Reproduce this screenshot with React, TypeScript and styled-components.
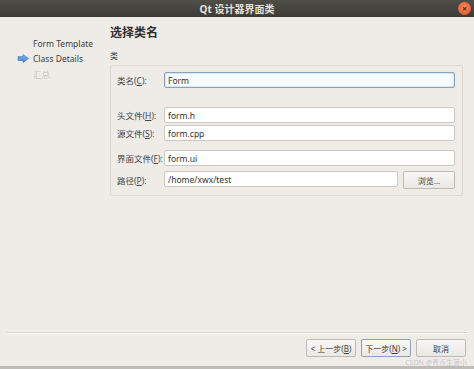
import React from 'react';
import styled, { createGlobalStyle } from 'styled-components';

const GlobalStyle = createGlobalStyle`
    html, body {
        margin: 0;
        padding: 0;
        background: #efebe7;
    }
    * {
        box-sizing: border-box;
    }
`

const Window = styled.div`
    position: relative;
    width: 474px;
    height: 369px;
    display: flex;
    flex-direction: column;
    background: #efece8;
    font-family: "Noto Sans", "Noto Sans CJK SC", sans-serif;
    color: #3c3c3c;
    overflow: hidden;
    border-bottom: 3px solid #bfbbb6;
`

const TitleBar = styled.div`
    position: relative;
    height: 17px;
    flex: none;
    display: flex;
    align-items: center;
    justify-content: center;
    background: linear-gradient(#4f4e49, #3b3a36);
    color: #e4e0d8;
    font-size: 10px;
    font-weight: bold;
`

const CloseButton = styled.div`
    position: absolute;
    right: 3px;
    top: 2px;
    width: 13px;
    height: 13px;
    border-radius: 50%;
    background: radial-gradient(circle at 50% 40%, #f8875a, #e0532a);
    display: flex;
    align-items: center;
    justify-content: center;
    color: #5a2a18;
    font-size: 9px;
    line-height: 1;
`

const Body = styled.div`
    flex: 1;
    display: flex;
    flex-direction: column;
    padding: 0 7px;
`

const Main = styled.div`
    flex: 1;
    display: flex;
`

const Sidebar = styled.div`
    width: 103px;
    flex: none;
    padding-top: 19px;
    display: flex;
    flex-direction: column;
`

const NavItem = styled.div<{ $disabled?: boolean }>`
    height: 15px;
    display: flex;
    align-items: center;
    font-size: 8.5px;
    color: ${(props) => (props.$disabled ? '#c9c5c0' : '#3c3c3c')};
    padding-left: 10px;
`

const ArrowSlot = styled.div`
    width: 16px;
    height: 10px;
    display: flex;
    align-items: center;
`

const Content = styled.div`
    flex: 1;
    display: flex;
    flex-direction: column;
    padding-top: 8px;
    padding-right: 4px;
`

const Heading = styled.div`
    font-size: 12px;
    font-weight: bold;
    color: #2e2e2e;
    line-height: 16px;
`

const GroupTitle = styled.div`
    margin-top: 10px;
    font-size: 8px;
    line-height: 10px;
`

const Frame = styled.div`
    margin-top: 4px;
    border: 1px solid #dcd8d3;
    border-radius: 2px;
    background: #efece8;
    padding: 6px 7px 6px 6px;
    display: flex;
    flex-direction: column;
`

const Row = styled.div<{ $gap?: number }>`
    display: grid;
    grid-template-columns: 47px 1fr;
    align-items: center;
    margin-top: ${(props) => props.$gap ?? 0}px;
`

const Label = styled.div`
    font-size: 8.5px;
    color: #444;
    white-space: nowrap;
`

const InputRow = styled.div`
    display: flex;
    gap: 5px;
`

const Input = styled.div<{ $focused?: boolean }>`
    flex: 1;
    height: 16px;
    display: flex;
    align-items: center;
    padding-left: 3px;
    font-size: 8.5px;
    color: #333;
    background: ${(props) => (props.$focused ? '#f5fbff' : '#ffffff')};
    border: 1px solid ${(props) => (props.$focused ? '#8aa3ba' : '#ccc8c3')};
    box-shadow: ${(props) => (props.$focused ? 'inset 0 0 0 1px #d6e6f4' : 'none')};
    border-radius: 2px;
`

const Button = styled.div<{ $width?: number; $focused?: boolean }>`
    width: ${(props) => props.$width ?? 50}px;
    height: 18px;
    display: flex;
    align-items: center;
    justify-content: center;
    font-size: 8px;
    color: #3c3c3c;
    background: linear-gradient(#f9f8f7, #eae8e5);
    border: 1px solid ${(props) => (props.$focused ? '#8aa3ba' : '#bdb9b3')};
    border-radius: 2px;
    white-space: nowrap;
`

const Separator = styled.div`
    height: 1px;
    background: #d6d2cd;
    border-bottom: 1px solid #f9f8f6;
    box-sizing: content-box;
`

const Footer = styled.div`
    height: 32px;
    display: flex;
    justify-content: flex-end;
    align-items: center;
    gap: 5px;
    padding-right: 1px;
    padding-bottom: 4px;
`

const Underline = styled.span`
    text-decoration: underline;
`

const Watermark = styled.div`
    position: absolute;
    right: 7px;
    bottom: 0;
    font-size: 7px;
    line-height: 7px;
    color: rgba(190, 192, 198, 0.85);
    white-space: nowrap;
`

function Arrow() {
    return (
        <svg width="12" height="9" viewBox="0 0 12 9">
            <defs>
                <linearGradient id="ag" x1="0" y1="0" x2="0" y2="1">
                    <stop offset="0" stopColor="#8ab8ec" />
                    <stop offset="1" stopColor="#3f7fcf" />
                </linearGradient>
            </defs>
            <path d="M1 2.5 H6 V0.5 L11.5 4.5 L6 8.5 V6.5 H1 Z" fill="url(#ag)" stroke="#3a73bb" strokeWidth="0.6" strokeLinejoin="round" />
        </svg>
    );
}

function App() {
    return (
        <>
            <GlobalStyle />
            <Window>
                <TitleBar>
                    Qt 设计器界面类
                    <CloseButton>×</CloseButton>
                </TitleBar>
                <Body>
                    <Main>
                        <Sidebar>
                            <NavItem><ArrowSlot />Form Template</NavItem>
                            <NavItem><ArrowSlot><Arrow /></ArrowSlot>Class Details</NavItem>
                            <NavItem $disabled><ArrowSlot />汇总</NavItem>
                        </Sidebar>
                        <Content>
                            <Heading>选择类名</Heading>
                            <GroupTitle>类</GroupTitle>
                            <Frame>
                                <Row>
                                    <Label>类名(<Underline>C</Underline>):</Label>
                                    <Input $focused>Form</Input>
                                </Row>
                                <Row $gap={19}>
                                    <Label>头文件(<Underline>H</Underline>):</Label>
                                    <Input>form.h</Input>
                                </Row>
                                <Row $gap={2}>
                                    <Label>源文件(<Underline>S</Underline>):</Label>
                                    <Input>form.cpp</Input>
                                </Row>
                                <Row $gap={9}>
                                    <Label>界面文件(<Underline>F</Underline>):</Label>
                                    <Input>form.ui</Input>
                                </Row>
                                <Row $gap={5}>
                                    <Label>路径(<Underline>P</Underline>):</Label>
                                    <InputRow>
                                        <Input>/home/xwx/test</Input>
                                        <Button $width={52}>浏览...</Button>
                                    </InputRow>
                                </Row>
                            </Frame>
                        </Content>
                    </Main>
                    <Separator />
                    <Footer>
                        <Button>&lt; 上一步(<Underline>B</Underline>)</Button>
                        <Button $focused>下一步(<Underline>N</Underline>) &gt;</Button>
                        <Button>取消</Button>
                    </Footer>
                </Body>
                <Watermark>CSDN @青点生菠小</Watermark>
            </Window>
        </>
    );
}

export default App;
